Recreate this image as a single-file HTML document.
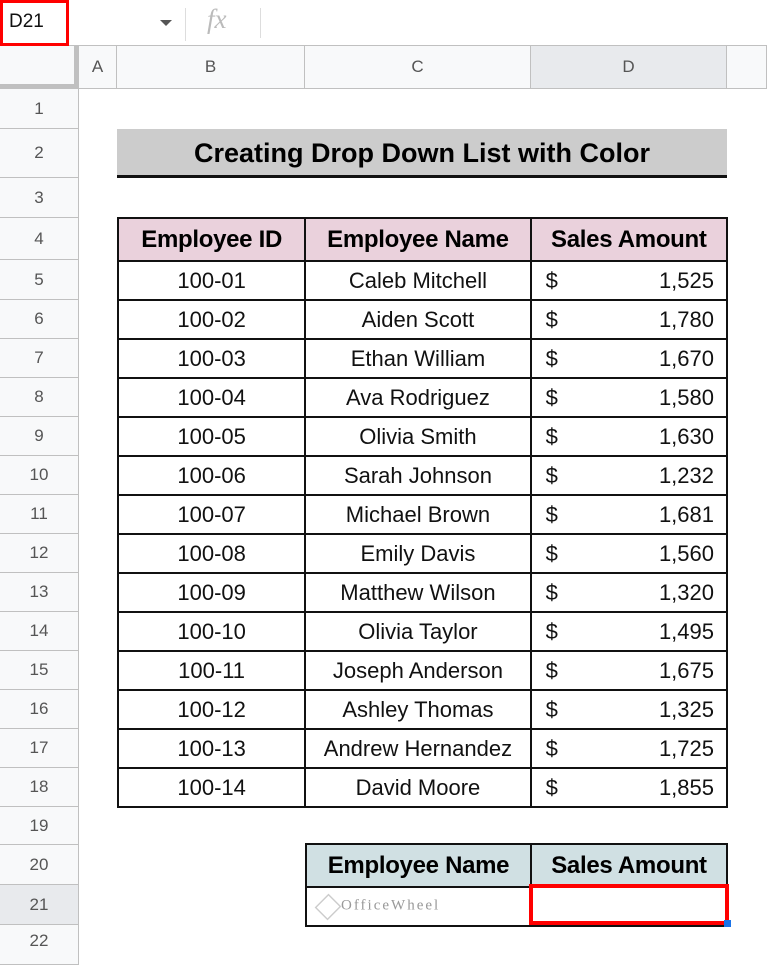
<!DOCTYPE html>
<html><head><meta charset="utf-8"><style>
*{margin:0;padding:0;box-sizing:border-box}
body{width:767px;height:947px;overflow:hidden;background:#fff;font-family:"Liberation Sans",Arial,sans-serif;position:relative}
.a{position:absolute}
.rh{position:absolute;left:0;width:79px;background:#f8f9fa;border-bottom:1px solid #c0c0c0;border-right:1px solid #c0c0c0;color:#555;font-size:17px;text-align:center;display:flex;align-items:center;justify-content:center}
.ch{position:absolute;top:46px;height:43px;background:#f8f9fa;border-right:1px solid #c0c0c0;border-bottom:1px solid #c0c0c0;color:#555;font-size:17px;display:flex;align-items:center;justify-content:center}
table{border-collapse:collapse;position:absolute}
td{border:2px solid #111;font-size:22px;color:#111;text-align:center;padding:0;white-space:nowrap}
th{border:2px solid #111;font-size:24px;font-weight:bold;color:#000;padding:0;white-space:nowrap;letter-spacing:-0.3px}
.amt{display:flex;justify-content:space-between;padding:0 12px 0 14px}
</style></head><body>
<div class="a" style="left:0;top:0;width:767px;height:46px;border-bottom:1px solid #c0c0c0;background:#fff"></div>
<div class="a" style="left:0;top:0;width:69px;height:46px;border:3px solid #f00;font-size:19px;padding:8px 0 0 6px;color:#111">D21</div>
<div class="a" style="left:160px;top:20px;width:0;height:0;border-left:6px solid transparent;border-right:6px solid transparent;border-top:6px solid #555"></div>
<div class="a" style="left:185px;top:8px;width:1px;height:33px;background:#ddd"></div>
<div class="a" style="left:207px;top:4px;font-family:'Liberation Serif',serif;font-style:italic;font-size:27px;color:#bbb">fx</div>
<div class="a" style="left:260px;top:8px;width:1px;height:30px;background:#ddd"></div>
<div class="a" style="left:0;top:46px;width:79px;height:43px;background:#f8f9fa;border-right:5px solid #c0c0c0;border-bottom:5px solid #c0c0c0"></div>
<div class="ch" style="left:79px;width:38px">A</div>
<div class="ch" style="left:117px;width:188px">B</div>
<div class="ch" style="left:305px;width:226px">C</div>
<div class="ch" style="left:531px;width:196px;background:#e8eaed">D</div>
<div class="ch" style="left:727px;width:40px"></div>
<div class="rh" style="top:89px;height:40px">1</div>
<div class="rh" style="top:129px;height:49px">2</div>
<div class="rh" style="top:178px;height:40px">3</div>
<div class="rh" style="top:218px;height:42px">4</div>
<div class="rh" style="top:260px;height:40px">5</div>
<div class="rh" style="top:300px;height:39px">6</div>
<div class="rh" style="top:339px;height:39px">7</div>
<div class="rh" style="top:378px;height:39px">8</div>
<div class="rh" style="top:417px;height:39px">9</div>
<div class="rh" style="top:456px;height:39px">10</div>
<div class="rh" style="top:495px;height:39px">11</div>
<div class="rh" style="top:534px;height:39px">12</div>
<div class="rh" style="top:573px;height:39px">13</div>
<div class="rh" style="top:612px;height:39px">14</div>
<div class="rh" style="top:651px;height:39px">15</div>
<div class="rh" style="top:690px;height:39px">16</div>
<div class="rh" style="top:729px;height:39px">17</div>
<div class="rh" style="top:768px;height:39px">18</div>
<div class="rh" style="top:807px;height:38px">19</div>
<div class="rh" style="top:845px;height:40px">20</div>
<div class="rh" style="top:885px;height:40px;background:#e8eaed">21</div>
<div class="rh" style="top:925px;height:40px;align-items:flex-start;padding-top:6px">22</div>

<div class="a" style="left:117px;top:129px;width:610px;height:49px;background:#cccccc;border-bottom:3px solid #111;font-size:27px;font-weight:bold;text-align:center;line-height:48px;color:#000">Creating Drop Down List with Color</div>

<table style="left:117px;top:217px;width:611px">
<colgroup><col style="width:188px"><col style="width:226px"><col style="width:197px"></colgroup>
<tr style="height:43px;background:#ead1dc"><th>Employee ID</th><th>Employee Name</th><th>Sales Amount</th></tr>
<tr style="height:39px"><td>100-01</td><td>Caleb Mitchell</td><td><div class="amt"><span>$</span><span>1,525</span></div></td></tr>
<tr style="height:39px"><td>100-02</td><td>Aiden Scott</td><td><div class="amt"><span>$</span><span>1,780</span></div></td></tr>
<tr style="height:39px"><td>100-03</td><td>Ethan William</td><td><div class="amt"><span>$</span><span>1,670</span></div></td></tr>
<tr style="height:39px"><td>100-04</td><td>Ava Rodriguez</td><td><div class="amt"><span>$</span><span>1,580</span></div></td></tr>
<tr style="height:39px"><td>100-05</td><td>Olivia Smith</td><td><div class="amt"><span>$</span><span>1,630</span></div></td></tr>
<tr style="height:39px"><td>100-06</td><td>Sarah Johnson</td><td><div class="amt"><span>$</span><span>1,232</span></div></td></tr>
<tr style="height:39px"><td>100-07</td><td>Michael Brown</td><td><div class="amt"><span>$</span><span>1,681</span></div></td></tr>
<tr style="height:39px"><td>100-08</td><td>Emily Davis</td><td><div class="amt"><span>$</span><span>1,560</span></div></td></tr>
<tr style="height:39px"><td>100-09</td><td>Matthew Wilson</td><td><div class="amt"><span>$</span><span>1,320</span></div></td></tr>
<tr style="height:39px"><td>100-10</td><td>Olivia Taylor</td><td><div class="amt"><span>$</span><span>1,495</span></div></td></tr>
<tr style="height:39px"><td>100-11</td><td>Joseph Anderson</td><td><div class="amt"><span>$</span><span>1,675</span></div></td></tr>
<tr style="height:39px"><td>100-12</td><td>Ashley Thomas</td><td><div class="amt"><span>$</span><span>1,325</span></div></td></tr>
<tr style="height:39px"><td>100-13</td><td>Andrew Hernandez</td><td><div class="amt"><span>$</span><span>1,725</span></div></td></tr>
<tr style="height:39px"><td>100-14</td><td>David Moore</td><td><div class="amt"><span>$</span><span>1,855</span></div></td></tr>
</table>

<table style="left:305px;top:843px;width:423px">
<colgroup><col style="width:226px"><col style="width:197px"></colgroup>
<tr style="height:43px;background:#d0e0e3"><th>Employee Name</th><th>Sales Amount</th></tr>
<tr style="height:39px"><td style="text-align:left;padding-left:8px"><span style="display:inline-block;width:26px;height:28px;border:2px solid #ccc;transform:rotate(45deg) scale(.7);vertical-align:middle"></span><span style="font-family:'Liberation Serif',serif;font-size:15px;color:#999;letter-spacing:2px;vertical-align:middle">OfficeWheel</span></td><td></td></tr>
</table>
<div class="a" style="left:529px;top:884px;width:200px;height:41px;border:4px solid #f00"></div>
<div class="a" style="left:724px;top:920px;width:7px;height:7px;background:#1a73e8"></div>
</body></html>
